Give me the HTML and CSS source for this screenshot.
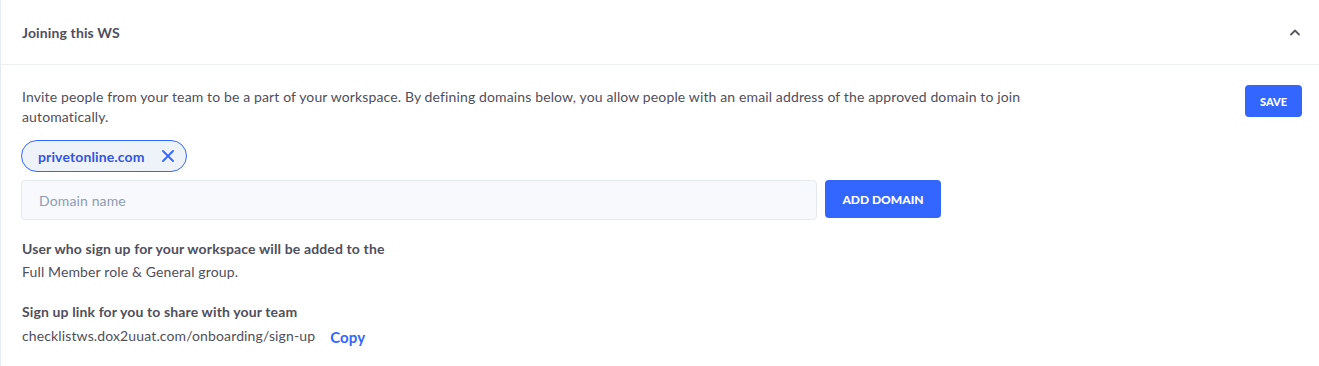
FILE: index.html
```html
<!DOCTYPE html>
<html>
<head>
<meta charset="utf-8">
<link rel="stylesheet" href="styles.css">
</head>
<body>
<div class="card">
  <div class="card-header">
    <span class="title">Joining this WS</span>
    <svg class="chevron" width="12" height="8" viewBox="0 0 12 8"><path d="M2 6.5 L6 2.5 L10 6.5" fill="none" stroke="#5a5a66" stroke-width="1.8" stroke-linecap="round" stroke-linejoin="round"/></svg>
  </div>
  <div class="card-body">
    <div class="top-row">
      <p class="desc">Invite people from your team to be a part of your workspace. By defining domains below, you allow people with an email address of the approved domain to join<br>automatically.</p>
      <button class="btn btn-save">SAVE</button>
    </div>
    <div class="chips">
      <span class="chip">privetonline.com
        <svg class="chip-x" width="12" height="12" viewBox="0 0 12 12"><path d="M1 1 L11 11 M11 1 L1 11" fill="none" stroke="#3366ff" stroke-width="1.8" stroke-linecap="round"/></svg>
      </span>
    </div>
    <div class="add-row">
      <input class="domain-input" type="text" placeholder="Domain name">
      <button class="btn btn-add">ADD DOMAIN</button>
    </div>
    <div class="info">
      <div class="label">User who sign up for your workspace will be added to the</div>
      <div class="text">Full Member role &amp; General group.</div>
    </div>
    <div class="info info-link">
      <div class="label">Sign up link for you to share with your team</div>
      <div class="text link-line"><span>checklistws.dox2uuat.com/onboarding/sign-up</span><span class="copy">Copy</span></div>
    </div>
  </div>
</div>
</body>
</html>
```

FILE: styles.css
```css
html, body {
  margin: 0;
  padding: 0;
  background: #ffffff;
}
body {
  font-family: "Lato", "Liberation Sans", sans-serif;
  color: #4f4f5c;
  font-size: 14px;
  letter-spacing: 0.13px;
}
.card {
  border-left: 1px solid #e6ebf4;
  height: 366px;
  box-sizing: border-box;
}
.card-header {
  height: 64px;
  border-bottom: 1px solid #edf1f7;
  display: flex;
  align-items: center;
  justify-content: space-between;
  padding: 0 18px 0 21px;
}
.title {
  font-size: 14px;
  font-weight: 700;
  color: #4f4f5c;
  padding-top: 1px;
}
.chevron {
  display: block;
  margin-top: -1px;
}
.card-body {
  padding: 20px 17px 0 20px;
}
.top-row {
  display: flex;
  align-items: flex-start;
  justify-content: space-between;
}
.desc {
  margin: 0 0 0 1px;
  padding-top: 2px;
  line-height: 20px;
  font-size: 14px;
}
.btn {
  border: none;
  background: #3366ff;
  color: #fff;
  font-family: "Lato", "Liberation Sans", sans-serif;
  font-weight: 900;
  letter-spacing: 0;
  border-radius: 4px;
  cursor: pointer;
}
.btn-save {
  width: 57px;
  height: 32px;
  font-size: 11px;
  flex: none;
}
.chips {
  margin-top: 13px;
  display: flex;
}
.chip {
  display: inline-flex;
  align-items: center;
  height: 32px;
  box-sizing: border-box;
  border: 1px solid #3366ff;
  border-radius: 16px;
  background: #eef3f9;
  color: #3355e0;
  font-weight: 700;
  font-size: 14px;
  padding: 0 12px 0 16px;
  gap: 17px;
}
.chip-x {
  display: block;
}
.add-row {
  margin-top: 8px;
  display: flex;
  align-items: flex-start;
  gap: 8px;
}
.domain-input {
  width: 796px;
  height: 40px;
  box-sizing: border-box;
  background: #f7f9fc;
  border: 1px solid #e4e9f2;
  border-radius: 4px;
  padding: 0 17px;
  font-family: "Lato", "Liberation Sans", sans-serif;
  font-size: 14px;
  letter-spacing: 0.13px;
  color: #4f4f5c;
  outline: none;
}
.domain-input::placeholder {
  color: #8f9bb3;
}
.btn-add {
  width: 116px;
  height: 38px;
  font-size: 12px;
}
.info {
  margin-top: 19px;
  line-height: 20px;
  padding-left: 1px;
}
.info .text {
  margin-top: 3px;
}
.info-link {
  margin-top: 20px;
}
.label {
  font-weight: 700;
}
.link-line {
  display: flex;
  align-items: baseline;
  gap: 15px;
}
.copy {
  color: #3366ff;
  font-weight: 700;
  font-size: 15px;
  position: relative;
  top: 2px;
}
```
